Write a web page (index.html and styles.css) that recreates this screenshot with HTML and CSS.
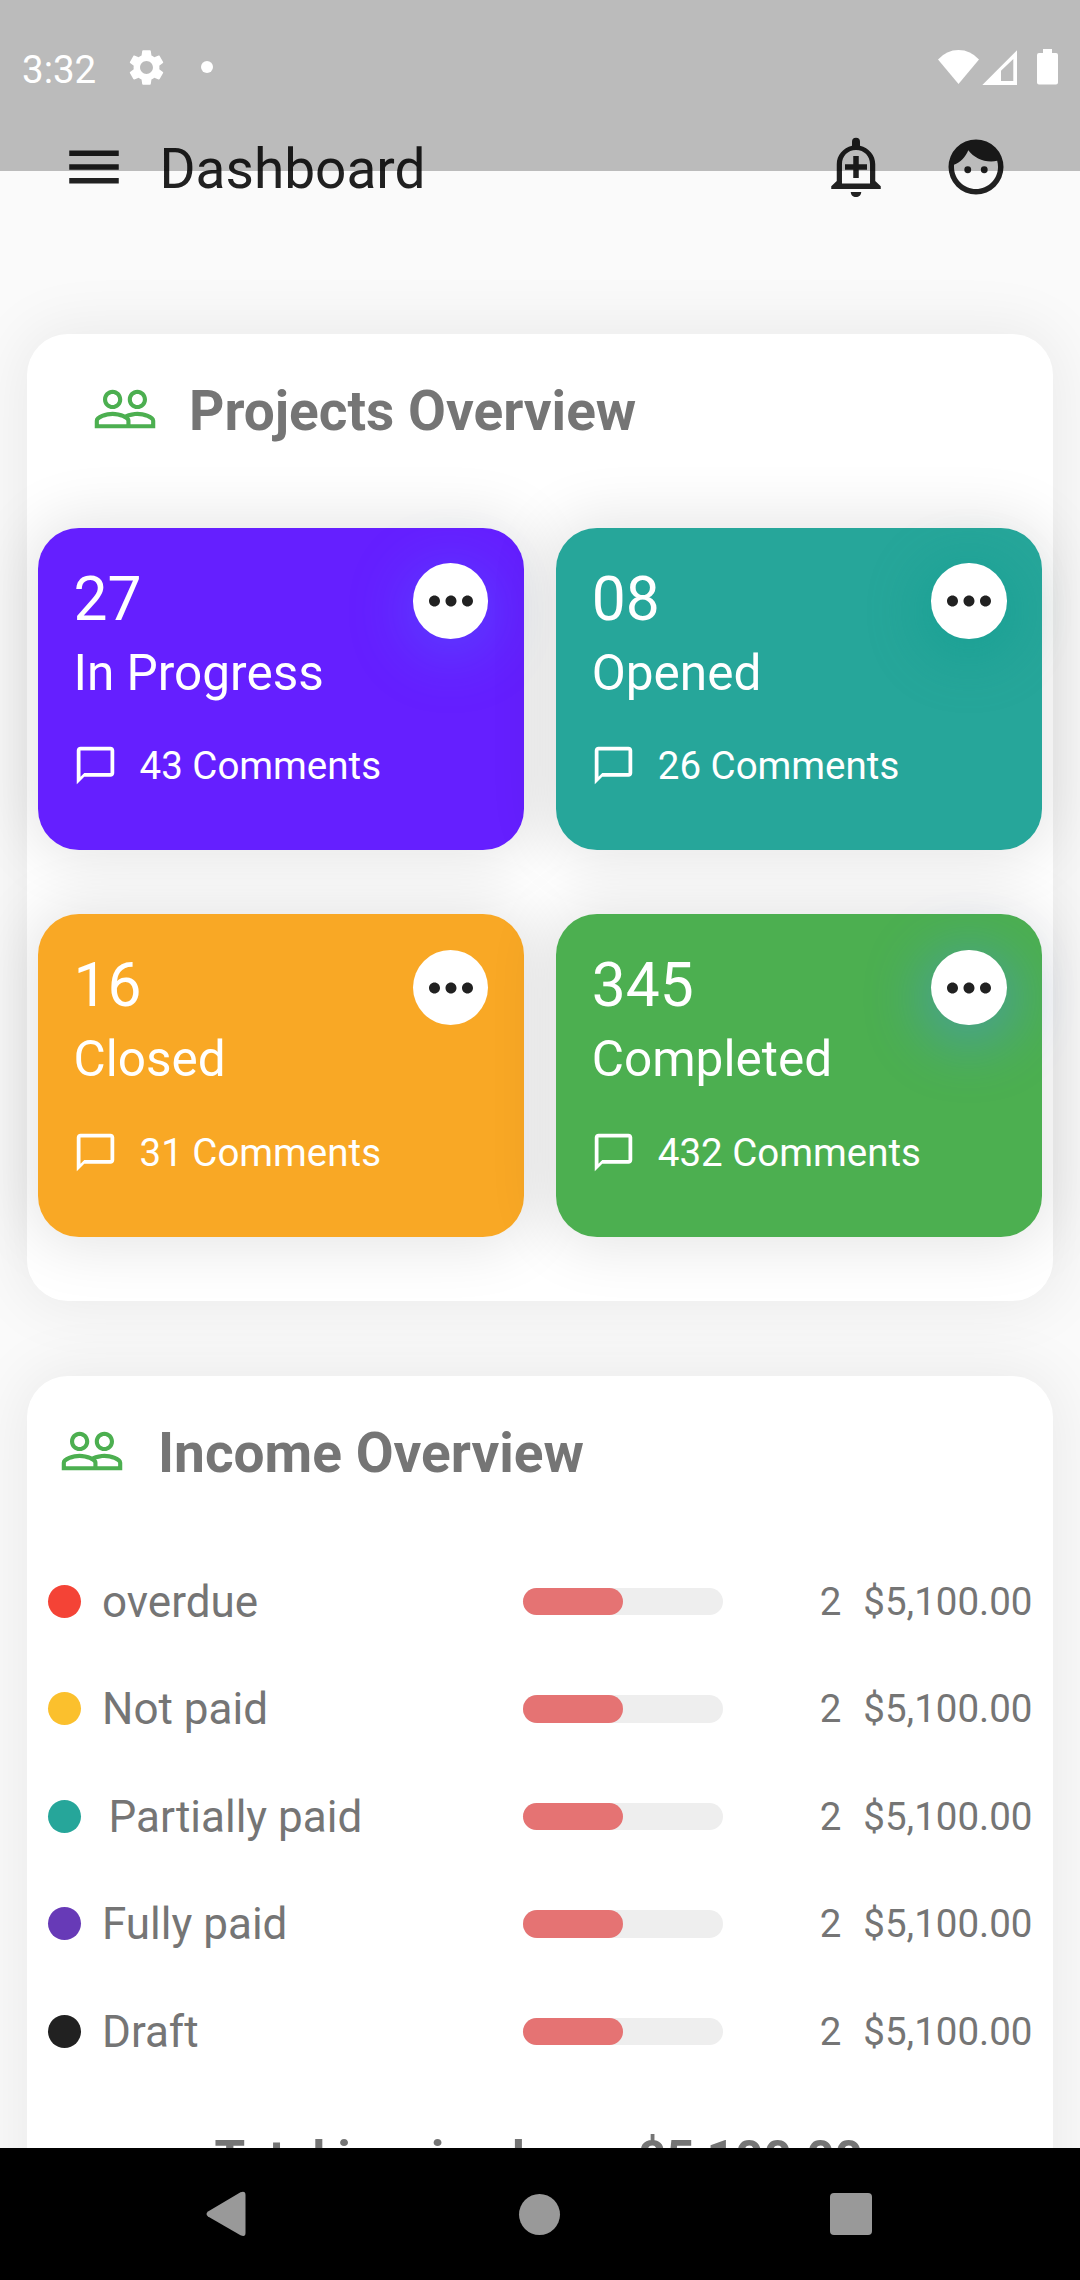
FILE: index.html
```html
<!DOCTYPE html>
<html lang="en">
<head>
  <meta charset="UTF-8" />
  <meta name="viewport" content="width=device-width, initial-scale=1.0"/>
  <title>Dashboard</title>
  <link rel="stylesheet" href="styles.css">
</head>
<body>
  <!-- shared icons -->
  <svg width="0" height="0" class="sprite">
    <symbol id="people" viewBox="0 0 24 24">
      <path d="M16.5 13c-1.2 0-3.07.34-4.5 1-1.43-.67-3.3-1-4.5-1C5.33 13 1 14.08 1 16.25V19h22v-2.75c0-2.17-4.33-3.25-6.5-3.25zm-4 4.5h-10v-1.25c0-.54 2.56-1.75 5-1.75s5 1.21 5 1.75v1.25zm9 0H14v-1.25c0-.46-.2-.86-.52-1.22.88-.3 1.96-.53 3.02-.53 2.44 0 5 1.21 5 1.75v1.25zM7.5 12c1.93 0 3.5-1.57 3.5-3.5S9.43 5 7.5 5 4 6.57 4 8.5 5.57 12 7.5 12zm0-5.5c1.1 0 2 .9 2 2s-.9 2-2 2-2-.9-2-2 .9-2 2-2zm9 5.5c1.93 0 3.5-1.57 3.5-3.5S18.43 5 16.5 5 13 6.57 13 8.5s1.57 3.5 3.5 3.5zm0-5.5c1.1 0 2 .9 2 2s-.9 2-2 2-2-.9-2-2 .9-2 2-2z"/>
    </symbol>
    <symbol id="chat" viewBox="0 0 24 24">
      <path d="M20 2H4c-1.1 0-2 .9-2 2v18l4-4h14c1.1 0 2-.9 2-2V4c0-1.1-.9-2-2-2zm0 14H6l-2 2V4h16v12z"/>
    </symbol>
    <symbol id="more" viewBox="0 0 24 24">
      <path d="M6 10c-1.1 0-2 .9-2 2s.9 2 2 2 2-.9 2-2-.9-2-2-2zm12 0c-1.1 0-2 .9-2 2s.9 2 2 2 2-.9 2-2-.9-2-2-2zm-6 0c-1.1 0-2 .9-2 2s.9 2 2 2 2-.9 2-2-.9-2-2-2z"/>
    </symbol>
  </svg>

  <div class="screen">
    <div class="page">
      <header class="app-bar">
        <svg class="icon" viewBox="0 0 24 24"><path d="M3 18h18v-2H3v2zm0-5h18v-2H3v2zm0-7v2h18V6H3z"/></svg>
        <h1>Dashboard</h1>
        <svg class="icon bell" viewBox="0 0 24 24">
          <path fill-rule="evenodd" d="M10.1 21.05c0 1.05.85 1.9 1.9 1.9s1.9-.85 1.9-1.9zM19 17.1V11c0-3.25-2.3-5.95-5.55-6.7V2.8a1.45 1.45 0 0 0-2.9 0v1.5C7.3 5.05 5 7.75 5 11v6.1l-2 1.9v1h18v-1zM17.1 18H6.9v-7c0-2.9 2.1-5.15 5.1-5.15S17.1 8.1 17.1 11z"/>
          <path d="M13 8h-2v3H8v2h3v3h2v-3h3v-2h-3z"/>
        </svg>
        <svg class="icon face" viewBox="0 0 24 24">
          <path fill-rule="evenodd" d="M22 12a10 10 0 1 1-20 0 10 10 0 0 1 20 0zM20 12c0-.78-.1-1.53-.3-2.24-.7.17-1.4.24-2.2.24-3.4 0-6.4-1.6-8.3-4.1C8.2 8.4 6.3 10.3 4 11.2V12c0 4.41 3.59 8 8 8s8-3.59 8-8z"/>
          <circle cx="9" cy="13" r="1.25"/><circle cx="15" cy="13" r="1.25"/>
        </svg>
      </header>

      <section class="card projects">
        <div class="card-title">
          <svg class="icon"><use href="#people"/></svg>
          <h2>Projects Overview</h2>
        </div>
        <div class="tiles">
          <div class="tile progress">
            <div class="info">
              <p class="number">27</p>
              <p class="label">In Progress</p>
              <p class="comments"><svg><use href="#chat"/></svg>43 Comments</p>
            </div>
            <div class="menu"><svg class="icon"><use href="#more"/></svg></div>
          </div>
          <div class="tile opened">
            <div class="info">
              <p class="number">08</p>
              <p class="label">Opened</p>
              <p class="comments"><svg><use href="#chat"/></svg>26 Comments</p>
            </div>
            <div class="menu"><svg class="icon"><use href="#more"/></svg></div>
          </div>
          <div class="tile closed">
            <div class="info">
              <p class="number">16</p>
              <p class="label">Closed</p>
              <p class="comments"><svg><use href="#chat"/></svg>31 Comments</p>
            </div>
            <div class="menu"><svg class="icon"><use href="#more"/></svg></div>
          </div>
          <div class="tile completed">
            <div class="info">
              <p class="number">345</p>
              <p class="label">Completed</p>
              <p class="comments"><svg><use href="#chat"/></svg>432 Comments</p>
            </div>
            <div class="menu"><svg class="icon"><use href="#more"/></svg></div>
          </div>
        </div>
      </section>

      <section class="card income">
        <div class="card-title">
          <svg class="icon"><use href="#people"/></svg>
          <h2>Income Overview</h2>
        </div>
        <div class="row">
          <span class="dot red"></span><span class="name">overdue</span>
          <div class="bar"><div class="fill" style="width: 50%"></div></div>
          <span class="count">2</span><span class="amount">$5,100.00</span>
        </div>
        <div class="row">
          <span class="dot yellow"></span><span class="name">Not paid</span>
          <div class="bar"><div class="fill" style="width: 50%"></div></div>
          <span class="count">2</span><span class="amount">$5,100.00</span>
        </div>
        <div class="row">
          <span class="dot teal"></span><span class="name partial">Partially paid</span>
          <div class="bar"><div class="fill" style="width: 50%"></div></div>
          <span class="count">2</span><span class="amount">$5,100.00</span>
        </div>
        <div class="row">
          <span class="dot purple"></span><span class="name">Fully paid</span>
          <div class="bar"><div class="fill" style="width: 50%"></div></div>
          <span class="count">2</span><span class="amount">$5,100.00</span>
        </div>
        <div class="row">
          <span class="dot black"></span><span class="name">Draft</span>
          <div class="bar"><div class="fill" style="width: 50%"></div></div>
          <span class="count">2</span><span class="amount">$5,100.00</span>
        </div>
        <div class="total"><span>Total invoiced</span><span>$5,100.00</span></div>
      </section>
    </div>

    <nav class="nav-bar">
      <svg class="back" viewBox="0 0 40 46"><path d="M2 20.5 34.5 1.3Q39.5-.5 39.5 4V42Q39.5 46.5 34.5 44.2L2 25.5Q-1 23 2 20.5z"/></svg>
      <span class="home"></span>
      <span class="recent"></span>
    </nav>

    <div class="status-bar">
      <span class="time">3:32</span>
      <svg class="gear" viewBox="0 0 24 24"><path d="M19.14 12.94c.04-.3.06-.61.06-.94 0-.32-.02-.64-.07-.94l2.03-1.58c.18-.14.23-.41.12-.61l-1.92-3.32c-.12-.22-.37-.29-.59-.22l-2.39.96c-.5-.38-1.03-.7-1.62-.94l-.36-2.54c-.04-.24-.24-.41-.48-.41h-3.84c-.24 0-.43.17-.47.41l-.36 2.54c-.59.24-1.13.57-1.62.94l-2.39-.96c-.22-.08-.47 0-.59.22L2.74 8.87c-.12.21-.08.47.12.61l2.03 1.58c-.05.3-.09.63-.09.94s.02.64.07.94l-2.03 1.58c-.18.14-.23.41-.12.61l1.92 3.32c.12.22.37.29.59.22l2.39-.96c.5.38 1.03.7 1.62.94l.36 2.54c.05.24.24.41.48.41h3.84c.24 0 .44-.17.47-.41l.36-2.54c.59-.24 1.13-.56 1.62-.94l2.39.96c.22.08.47 0 .59-.22l1.92-3.32c.12-.22.07-.47-.12-.61l-2.01-1.58zM12 15.6c-1.98 0-3.6-1.62-3.6-3.6s1.62-3.6 3.6-3.6 3.6 1.62 3.6 3.6-1.62 3.6-3.6 3.6z"/></svg>
      <span class="notice"></span>
      <svg class="signals" viewBox="0 0 120 36">
        <path d="M0 10.5Q8.5 1 20.5 1T41 10.5L20.5 35z"/>
        <path fill-rule="evenodd" d="M44.3 36 79 1.3V36zM63 21.7V32h12.3V10z"/>
        <path d="M105 0h9v4h4q2 0 2 2v27.5q0 2-2 2h-17q-2 0-2-2V6q0-2 2-2h4z"/>
      </svg>
    </div>
  </div>
</body>
</html>
```

FILE: styles.css
```css
* {
  box-sizing: border-box;
}

body {
  margin: 0;
  background: #fafafa;
  font-family: Roboto, sans-serif;
  color: #757575;
}

h1, h2, p {
  margin: 0;
}

svg {
  display: block;
  fill: currentColor;
  flex-shrink: 0;
}

.sprite {
  position: absolute;
}

.icon {
  width: 66px;
  height: 66px;
}

.screen {
  position: relative;
  display: flex;
  flex-direction: column;
  width: 1080px;
  height: 2280px;
  overflow: hidden;
}

.page {
  flex: 1;
  min-height: 0;
  overflow: hidden;
  padding: 134px 27px 0;
}

/* status bar is a translucent layer over the page */
.status-bar {
  position: absolute;
  top: 0;
  left: 0;
  width: 100%;
  height: 171px;
  padding: 45px 22px 0;
  display: flex;
  align-items: flex-start;
  background: rgba(0, 0, 0, 0.25);
  color: #fff;
}

.time {
  font-size: 38.5px;
  line-height: 50px;
}

.gear {
  width: 43px;
  height: 43px;
  margin: 1px 0 0 29px;
}

.notice {
  width: 12px;
  height: 12px;
  margin: 16px 0 0 33px;
  border-radius: 50%;
  background: #fff;
}

.signals {
  width: 120px;
  height: 36px;
  margin: 4px 0 0 auto;
}

.app-bar {
  display: flex;
  align-items: center;
  height: 66px;
  padding: 0 44.5px 0 33.5px;
  color: #212121;
}

.app-bar h1 {
  font-size: 55px;
  font-weight: 400;
  line-height: 66px;
  margin: 3px 0 0 33px;
}

.bell {
  margin-left: auto;
}

.face {
  margin-left: 54px;
}

.card {
  background: #fff;
  border-radius: 41px;
  box-shadow: 0 0 62px 7px rgba(0, 0, 0, 0.065);
}

.card-title {
  display: flex;
  align-items: center;
  height: 66px;
}

.card-title .icon {
  color: #4caf50;
}

.card-title h2 {
  font-size: 55px;
  line-height: 66px;
  font-weight: 700;
  margin: 4px 0 0 31px;
}

.projects {
  margin-top: 134px;
  padding: 42px 11px 64px;
}

.projects .card-title {
  padding-left: 54px;
}

.tiles {
  display: grid;
  grid-template-columns: 1fr 1fr;
  gap: 64.5px 32.5px;
  margin-top: 85.5px;
}

.tile {
  display: flex;
  justify-content: space-between;
  align-items: flex-start;
  height: 322.3px;
  padding: 35.5px 35.5px 0;
  border-radius: 41px;
  color: #fff;
  box-shadow: 0 0 62px 8px rgba(0, 0, 0, 0.11);
}

.number {
  margin-top: 0.5px;
  font-size: 60.5px;
  line-height: 71px;
}

.label {
  font-size: 49.5px;
  line-height: 58px;
  margin-top: 9px;
}

.comments {
  display: flex;
  align-items: center;
  height: 45px;
  margin-top: 41.5px;
  font-size: 38.5px;
  white-space: nowrap;
}

.comments svg {
  width: 45px;
  height: 45px;
  margin: 0 21.5px 0 -0.5px;
}

.menu {
  display: flex;
  align-items: center;
  justify-content: center;
  width: 75.5px;
  height: 75.5px;
  border-radius: 50%;
  background: #fff;
  color: #212121;
}

.progress {
  background: #651fff;
}

.progress .menu {
  box-shadow: 0 10px 56px 10px rgba(68, 138, 255, 0.27);
}

.opened {
  background: #26a69a;
}

.opened .menu {
  box-shadow: 0 10px 56px 10px rgba(0, 150, 136, 0.33);
}

.closed {
  background: #f9a825;
}

.completed {
  background: #4caf50;
}

.completed .menu {
  box-shadow: 0 10px 56px 10px rgba(68, 138, 255, 0.4);
}

.income {
  height: 1000px;
  margin-top: 75px;
  padding: 42px 20.5px 0 21px;
}

.income .card-title {
  padding-left: 11px;
  margin-bottom: 64px;
}

.income .card-title h2 {
  margin-left: 33px;
}

.row {
  display: flex;
  align-items: center;
  height: 107.5px;
  font-size: 38.5px;
}

.dot {
  width: 33px;
  height: 33px;
  border-radius: 50%;
}

.red { background: #f44336; }
.yellow { background: #fbc02d; }
.teal { background: #26a69a; }
.purple { background: #673ab7; }
.black { background: #212121; }

.name {
  width: 421px;
  margin-left: 21px;
  padding-top: 0.5px;
  font-size: 44px;
}

.partial {
  padding-left: 6.5px;
}

.bar {
  width: 200px;
  height: 27.5px;
  border-radius: 14px;
  background: #eee;
}

.fill {
  height: 100%;
  border-radius: 14px;
  background: #e57373;
}

.count {
  margin-left: auto;
  margin-right: 22px;
}

.total {
  display: flex;
  justify-content: center;
  gap: 113px;
  padding: 45px 3px 0 0;
  font-size: 49.5px;
  font-weight: 700;
  line-height: 58px;
}

.nav-bar {
  display: flex;
  align-items: center;
  justify-content: space-between;
  height: 132px;
  padding: 0 208px 0 206px;
  background: #000;
  color: #999;
}

.back {
  width: 40px;
  height: 46px;
}

.home {
  width: 41px;
  height: 41px;
  margin-left: 3px;
  border-radius: 50%;
  background: #999;
}

.recent {
  width: 42px;
  height: 42px;
  border-radius: 4px;
  background: #999;
}
```
